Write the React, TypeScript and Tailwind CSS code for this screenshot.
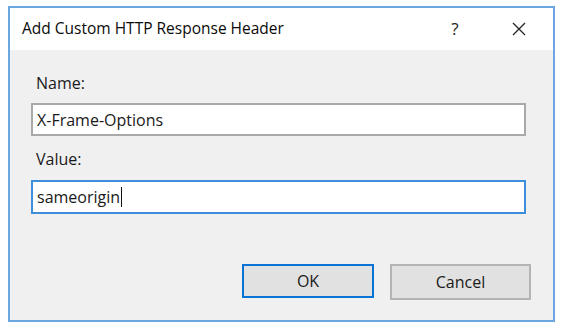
export default function App() {
  return (
    <div
      className="w-[561px] h-[332px] bg-white pt-[6px] pl-[8px]"
      style={{ fontFamily: '"Open Sans", "Noto Sans", sans-serif' }}
    >
      <div className="w-[547px] h-[316px] border-2 border-[#6ba6e0] flex flex-col bg-[#f0f0f0]">
        {/* title bar */}
        <div className="h-[42px] bg-white flex items-center pl-[12px] shrink-0">
          <span className="text-[15.5px] text-[#0a0a0a]">Add Custom HTTP Response Header</span>
          <span className="ml-auto w-[20px] text-center text-[17px] font-medium text-[#222]">?</span>
          <span className="ml-[44px] mr-[24px] w-[20px] flex justify-center text-[#222]">
            <svg width="16" height="16" viewBox="0 0 16 16" fill="none" stroke="currentColor" strokeWidth="1.3">
              <path d="M2 2 L14 14 M14 2 L2 14" />
            </svg>
          </span>
        </div>

        {/* body */}
        <div className="flex flex-col pl-[21px] pr-[27px] pt-[22px]">
          <label className="text-[16px] leading-[22px] text-[#1a1a1a] pl-[5px]">Name:</label>
          <div className="mt-[9px] h-[33px] bg-white border-2 border-[#a9a9a9] flex items-center pl-[4px] text-[16px] text-[#1a1a1a]">
            X-Frame-Options
          </div>
          <label className="mt-[12px] text-[16px] leading-[22px] text-[#1a1a1a] pl-[5px]">Value:</label>
          <div className="mt-[10px] h-[34px] bg-white border-2 border-[#3d8fdc] flex items-center pl-[4px] text-[16px] text-[#1a1a1a]">
            sameorigin
            <span className="ml-[1px] w-[1px] h-[20px] bg-[#111]" />
          </div>
        </div>

        {/* buttons */}
        <div className="flex justify-end gap-[16px] pr-[22px] mt-[50px]">
          <button className="w-[132px] h-[34px] bg-[#e1e1e1] border-2 border-[#0a74d6] text-[16px] text-[#1a1a1a]">
            OK
          </button>
          <button className="w-[141px] h-[36px] bg-[#e1e1e1] border-2 border-[#b4b4b4] text-[16px] text-[#1a1a1a]">
            Cancel
          </button>
        </div>
      </div>
    </div>
  );
}
